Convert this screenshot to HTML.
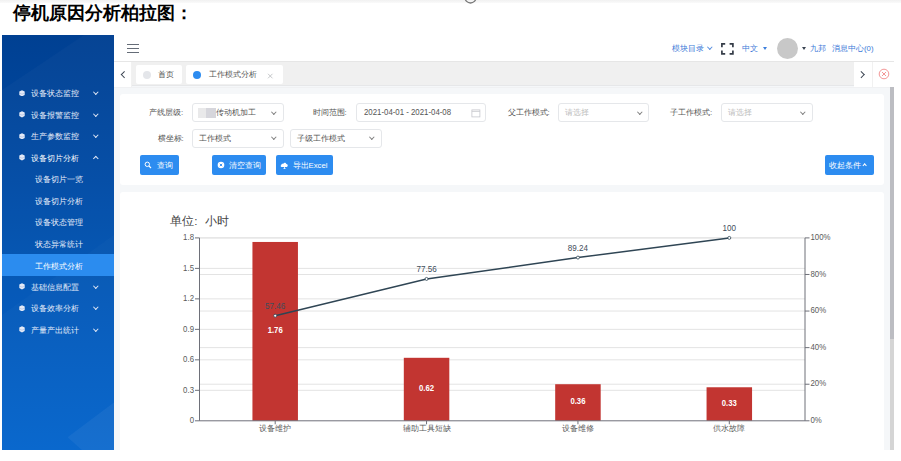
<!DOCTYPE html>
<html><head><meta charset="utf-8">
<style>
*{margin:0;padding:0;box-sizing:border-box}
html,body{width:901px;height:461px;overflow:hidden;background:#fff;font-family:"Liberation Sans",sans-serif;position:relative}
.a{position:absolute;white-space:nowrap}
#topband{left:0;top:0;width:901px;height:3px;background:linear-gradient(#f1f1f1,#fafafa)}
#title{left:12.5px;top:2px;font-size:18.2px;font-weight:bold;color:#000;line-height:22px}
#app{left:2px;top:35px;width:892px;height:415px;overflow:hidden;background:#f5f7f9}
#side{left:0;top:0;width:112px;height:415px;background:linear-gradient(180deg,#004092 0%,#004ba5 35%,#0057b9 65%,#0062cb 100%);overflow:hidden}
.mi{position:absolute;left:0;width:112px;height:21px;color:#e8eefa;font-size:7.7px;line-height:21px}
.mi .ic{position:absolute;left:16.6px;top:7.2px;width:6px;height:6.6px}.mi .ic svg{display:block}
.mi .tx{position:absolute;left:28.5px;top:0.5px}
.mi .ch{position:absolute;left:92px;top:7.8px;width:3.6px;height:3.6px;border-right:0.85px solid #dfe6f5;border-bottom:0.85px solid #dfe6f5;transform:rotate(45deg)}
.mi .ch.up{top:9.9px;transform:rotate(-135deg)}
.sub .tx{left:33px}
#hdr{left:112px;top:0;width:780px;height:26px;background:#fff;border-bottom:1px solid #eceef1}
.ham{position:absolute;height:1.6px;width:12.5px;background:#656c77}
.hr{color:#3d7ad8;font-size:7.8px;line-height:10px}
#tabs{left:112px;top:26px;width:780px;height:25px;background:#f0f0f0;border-bottom:1px solid #e4e6e9}
#content{left:112px;top:51px;width:776px;height:364px;background:#f5f7f9}
.card{position:absolute;background:#fff;border-radius:3px}
.lbl{color:#555;font-size:7.8px;line-height:10px;margin-top:0.8px}
.sel{position:absolute;border:1px solid #e5e7ea;border-radius:3px;background:#fff;height:18.5px}
.sel .v{position:absolute;left:6px;top:3.5px;font-size:7.8px;line-height:10px;color:#555}
.sel .ph{color:#bbb}
.sel .cv{position:absolute;top:5.3px;width:3.6px;height:3.6px;border-right:0.9px solid #808080;border-bottom:0.9px solid #808080;transform:rotate(45deg)}
.btn{position:absolute;background:#2d8cf0;border-radius:2px;color:#fff;font-size:7.8px;line-height:21px;height:20.5px}
#scroll{left:888px;top:52px;width:4px;height:363px;background:linear-gradient(#b9bbbe,#cfd0d2 60%,#d3d3d3)}
</style></head><body>
<div class="a" id="topband"></div>
<svg class="a" style="left:463px;top:-10px" width="16" height="16"><circle cx="7.5" cy="7.5" r="5.5" fill="none" stroke="#777" stroke-width="1.3"/></svg>
<div class="a" id="title">停机原因分析柏拉图：</div>

<div class="a" id="app">
  <div class="a" id="side">
    <svg class="a" style="left:0;top:0" width="112" height="415"><polygon points="0,55 112,-20 112,415 0,415" fill="rgba(255,255,255,0.025)"/><polygon points="0,280 112,200 112,415 0,415" fill="rgba(255,255,255,0.02)"/><polygon points="65.6,402.3 112,367.5 112,415 80,415" fill="rgba(255,255,255,0.05)"/></svg>
    <div class="mi" style="top:47.5px"><span class="ic"><svg width="6" height="6.6" viewBox="0 0 6 6.6"><path d="M3 0.2L5.7 1.6V5L3 6.4L0.3 5V1.6Z" fill="#e4eaf7"/><path d="M0.8 3.2L3 4.2L5.2 3.2" fill="none" stroke="#9bb2da" stroke-width="0.5"/></svg></span><span class="tx">设备状态监控</span><span class="ch"></span></div>
    <div class="mi" style="top:69px"><span class="ic"><svg width="6" height="6.6" viewBox="0 0 6 6.6"><path d="M3 0.2L5.7 1.6V5L3 6.4L0.3 5V1.6Z" fill="#e4eaf7"/><path d="M0.8 3.2L3 4.2L5.2 3.2" fill="none" stroke="#9bb2da" stroke-width="0.5"/></svg></span><span class="tx">设备报警监控</span><span class="ch"></span></div>
    <div class="mi" style="top:90.5px"><span class="ic"><svg width="6" height="6.6" viewBox="0 0 6 6.6"><path d="M3 0.2L5.7 1.6V5L3 6.4L0.3 5V1.6Z" fill="#e4eaf7"/><path d="M0.8 3.2L3 4.2L5.2 3.2" fill="none" stroke="#9bb2da" stroke-width="0.5"/></svg></span><span class="tx">生产参数监控</span><span class="ch"></span></div>
    <div class="mi" style="top:112px;color:#fff"><span class="ic"><svg width="6" height="6.6" viewBox="0 0 6 6.6"><path d="M3 0.2L5.7 1.6V5L3 6.4L0.3 5V1.6Z" fill="#e4eaf7"/><path d="M0.8 3.2L3 4.2L5.2 3.2" fill="none" stroke="#9bb2da" stroke-width="0.5"/></svg></span><span class="tx">设备切片分析</span><span class="ch up"></span></div>
    <div class="mi sub" style="top:133.5px"><span class="tx">设备切片一览</span></div>
    <div class="mi sub" style="top:155px"><span class="tx">设备切片分析</span></div>
    <div class="mi sub" style="top:176.5px"><span class="tx">设备状态管理</span></div>
    <div class="mi sub" style="top:198px"><span class="tx">状态异常统计</span></div>
    <div class="mi sub" style="top:219.3px;height:21.7px;line-height:23.5px;background:#2b8cef;color:#fff"><span class="tx">工作模式分析</span></div>
    <div class="mi" style="top:241px"><span class="ic"><svg width="6" height="6.6" viewBox="0 0 6 6.6"><path d="M3 0.2L5.7 1.6V5L3 6.4L0.3 5V1.6Z" fill="#e4eaf7"/><path d="M0.8 3.2L3 4.2L5.2 3.2" fill="none" stroke="#9bb2da" stroke-width="0.5"/></svg></span><span class="tx">基础信息配置</span><span class="ch"></span></div>
    <div class="mi" style="top:262.5px"><span class="ic"><svg width="6" height="6.6" viewBox="0 0 6 6.6"><path d="M3 0.2L5.7 1.6V5L3 6.4L0.3 5V1.6Z" fill="#e4eaf7"/><path d="M0.8 3.2L3 4.2L5.2 3.2" fill="none" stroke="#9bb2da" stroke-width="0.5"/></svg></span><span class="tx">设备效率分析</span><span class="ch"></span></div>
    <div class="mi" style="top:284px"><span class="ic"><svg width="6" height="6.6" viewBox="0 0 6 6.6"><path d="M3 0.2L5.7 1.6V5L3 6.4L0.3 5V1.6Z" fill="#e4eaf7"/><path d="M0.8 3.2L3 4.2L5.2 3.2" fill="none" stroke="#9bb2da" stroke-width="0.5"/></svg></span><span class="tx">产量产出统计</span><span class="ch"></span></div>
  </div>
</div>

<!-- header -->
<div class="a" style="left:114px;top:35px;width:780px;height:26.5px;background:#fff;border-bottom:1px solid #eef0f2"></div>
<div class="a ham" style="left:126.5px;top:43.7px"></div>
<div class="a ham" style="left:126.5px;top:47.6px"></div>
<div class="a ham" style="left:126.5px;top:51.5px"></div>
<div class="a hr" style="left:672px;top:43.5px">模块目录</div>
<div class="a" style="left:707.8px;top:45.3px;width:3.6px;height:3.6px;border-right:0.75px solid #5a8fdf;border-bottom:0.75px solid #5a8fdf;transform:rotate(45deg)"></div>
<svg class="a" style="left:721px;top:42.5px" width="13" height="12" viewBox="0 0 13 12"><path d="M0.9 4.2V0.9H4.2M8.6 0.9H11.9V4.2M11.9 7.6V10.9H8.6M4.2 10.9H0.9V7.6" fill="none" stroke="#353c48" stroke-width="1.7"/></svg>
<div class="a hr" style="left:741.5px;top:43.5px">中文</div>
<div class="a" style="left:762.5px;top:47px;width:0;height:0;border-left:2.7px solid transparent;border-right:2.7px solid transparent;border-top:3px solid #3d7fdd"></div>
<div class="a" style="left:777px;top:38px;width:21px;height:21px;border-radius:50%;background:#c8c8c8"></div>
<div class="a" style="left:801.5px;top:47px;width:0;height:0;border-left:2.8px solid transparent;border-right:2.8px solid transparent;border-top:3.2px solid #3b4452"></div>
<div class="a hr" style="left:810px;top:43.5px">九邦</div>
<div class="a hr" style="left:832px;top:43.5px">消息中心(0)</div>

<!-- tabs -->
<div class="a" style="left:114px;top:61.2px;width:780px;height:25.3px;background:#f0f0f0;border-top:1px solid #e6e6e6;border-bottom:1px solid #e6e7e9"></div>
<div class="a" style="left:114px;top:61.5px;width:18px;height:25px;background:#fff;border-right:1px solid #f1f1f1"></div>
<div class="a" style="left:121.5px;top:72px;width:4.5px;height:4.5px;border-left:1.2px solid #3b4452;border-bottom:1.2px solid #3b4452;transform:rotate(45deg)"></div>
<div class="a" style="left:135.5px;top:64.5px;width:46px;height:19.5px;background:#fff;border-radius:2px"></div>
<div class="a" style="left:143px;top:70.5px;width:8px;height:8px;border-radius:50%;background:#e4e6ea"></div>
<div class="a lbl" style="left:158px;top:69.5px">首页</div>
<div class="a" style="left:185.5px;top:64.5px;width:97.5px;height:19.5px;background:#fff;border-radius:2px"></div>
<div class="a" style="left:193px;top:70.5px;width:8px;height:8px;border-radius:50%;background:#2d8cf0"></div>
<div class="a lbl" style="left:208.5px;top:69.5px">工作模式分析</div>
<svg class="a" style="left:267px;top:72.5px" width="7" height="6"><path d="M1 0.8L5.5 5.3M5.5 0.8L1 5.3" stroke="#b8babd" stroke-width="0.8"/></svg>
<div class="a" style="left:854px;top:61.5px;width:18.5px;height:25px;background:#fff;border-right:1px solid #f1f1f1"></div>
<div class="a" style="left:859px;top:72px;width:4.5px;height:4.5px;border-right:1.2px solid #3b4452;border-top:1.2px solid #3b4452;transform:rotate(45deg)"></div>
<div class="a" style="left:872.5px;top:61.5px;width:21.5px;height:25px;background:#fff"></div>
<svg class="a" style="left:877px;top:67px" width="14" height="14"><circle cx="7" cy="7" r="4.8" fill="none" stroke="#f08a8a" stroke-width="0.9"/><path d="M5 5L9 9M9 5L5 9" stroke="#f08a8a" stroke-width="0.9"/></svg>

<!-- content bg -->
<div class="a" style="left:114px;top:86.5px;width:776px;height:363.5px;background:#f5f7f9"></div>
<div class="a" style="left:114px;top:86.5px;width:780px;height:1px;background:#f0f1f3"></div>
<div class="a" style="left:890px;top:87px;width:4px;height:363px;background:#d5d5d5"></div><div class="a" style="left:890px;top:87px;width:4px;height:252px;background:#bcbdc2"></div>

<!-- filter card -->
<div class="a card" style="left:119.5px;top:93.5px;width:764px;height:91px"></div>
<div class="a lbl" style="left:149px;top:107.5px">产线层级:</div>
<div class="sel" style="left:192px;top:103.3px;width:91.5px"><span class="a" style="left:5px;top:3.5px;width:8px;height:10px;background:#e9e9ea"></span><span class="a" style="left:13px;top:3.5px;width:10px;height:10px;background:#d6d6dc"></span><span class="v" style="left:23px">传动机加工</span><span class="cv" style="left:79px"></span></div>
<div class="a lbl" style="left:312.5px;top:107.5px">时间范围:</div>
<div class="sel" style="left:355.5px;top:103.3px;width:130px"><span class="v" style="left:7.5px;top:2.1px;font-size:9px;line-height:12px;transform:scaleX(0.87);transform-origin:0 0">2021-04-01 - 2021-04-08</span>
<svg class="a" style="left:114.8px;top:4.6px" width="10" height="9" viewBox="0 0 10 9"><rect x="0.9" y="0.9" width="8" height="7" fill="none" stroke="#c5c6cc" stroke-width="0.8"/><path d="M0.9 2.4H8.9" stroke="#c5c6cc" stroke-width="0.8"/></svg></div>
<div class="a lbl" style="left:507.5px;top:107.5px">父工作模式:</div>
<div class="sel" style="left:557.5px;top:103.3px;width:91.5px"><span class="v ph">请选择</span><span class="cv" style="left:79px"></span></div>
<div class="a lbl" style="left:670px;top:107.5px">子工作模式:</div>
<div class="sel" style="left:721px;top:103.3px;width:91.5px"><span class="v ph">请选择</span><span class="cv" style="left:79px"></span></div>
<div class="a lbl" style="left:157.5px;top:133.5px">横坐标:</div>
<div class="sel" style="left:192px;top:129px;width:91.5px"><span class="v">工作模式</span><span class="cv" style="left:79px"></span></div>
<div class="sel" style="left:290px;top:129px;width:91.5px"><span class="v">子级工作模式</span><span class="cv" style="left:79px"></span></div>
<div class="btn" style="left:139.5px;top:154.5px;width:39.5px"></div>
<svg class="a" style="left:144px;top:161px" width="8" height="8"><circle cx="3.3" cy="3.3" r="2.2" fill="none" stroke="#fff" stroke-width="1"/><path d="M5 5L7 7" stroke="#fff" stroke-width="1.1"/></svg>
<div class="a" style="left:157px;top:160.6px;color:#fff;font-size:7.8px;line-height:10px">查询</div>
<div class="btn" style="left:211.5px;top:154.5px;width:54.5px"></div>
<svg class="a" style="left:216.5px;top:161px" width="8" height="8"><circle cx="4" cy="4" r="3.3" fill="#fff"/><path d="M2.8 2.8L5.2 5.2M5.2 2.8L2.8 5.2" stroke="#2d8cf0" stroke-width="0.9"/></svg>
<div class="a" style="left:229px;top:160.6px;color:#fff;font-size:7.8px;line-height:10px">清空查询</div>
<div class="btn" style="left:275.5px;top:154.5px;width:57px"></div>
<svg class="a" style="left:280px;top:161px" width="9" height="9" viewBox="0 0 9 9"><path d="M1.6 6C0.5 6 0.3 4.4 1.3 4.1C1.3 2.9 2.5 2.4 3.2 2.9C3.7 1.5 5.9 1.5 6.3 3C7.5 3 8.1 4.2 7.6 5.1C7.5 5.7 7.1 6 6.6 6Z" fill="#fff"/><path d="M4.5 5.5V7.8M3.5 7L4.5 8L5.5 7" stroke="#fff" stroke-width="0.8" fill="none"/></svg>
<div class="a" style="left:292.5px;top:160.6px;color:#fff;font-size:7.8px;line-height:10px">导出Excel</div>
<div class="btn" style="left:825px;top:154.5px;width:49px"></div>
<div class="a" style="left:829px;top:160.6px;color:#fff;font-size:7.8px;line-height:10px">收起条件</div>
<div class="a" style="left:863px;top:163.8px;width:3.3px;height:3.3px;border-left:0.85px solid #fff;border-top:0.85px solid #fff;transform:rotate(45deg)"></div>

<!-- chart card -->
<div class="a card" style="left:119.5px;top:191.5px;width:764px;height:270px"></div>
<div class="a" style="left:169.5px;top:212.8px;font-size:11.6px;line-height:16px;color:#444">单位<span style="display:inline-block;width:11.8px;padding-left:0.8px">:</span>小时</div>

<!--chart--><svg class="a" style="left:0;top:0" width="901" height="461" viewBox="0 0 901 461" font-family="Liberation Sans, sans-serif">
<line x1="199.5" x2="805.0" y1="390.32" y2="390.32" stroke="#e3e3e3" stroke-width="1"/>
<line x1="199.5" x2="805.0" y1="359.83" y2="359.83" stroke="#e3e3e3" stroke-width="1"/>
<line x1="199.5" x2="805.0" y1="329.35" y2="329.35" stroke="#e3e3e3" stroke-width="1"/>
<line x1="199.5" x2="805.0" y1="298.87" y2="298.87" stroke="#e3e3e3" stroke-width="1"/>
<line x1="199.5" x2="805.0" y1="268.38" y2="268.38" stroke="#e3e3e3" stroke-width="1"/>
<line x1="199.5" x2="805.0" y1="237.90" y2="237.90" stroke="#e3e3e3" stroke-width="1"/>
<line x1="199.5" x2="805.0" y1="384.22" y2="384.22" stroke="#e3e3e3" stroke-width="1"/>
<line x1="199.5" x2="805.0" y1="347.64" y2="347.64" stroke="#e3e3e3" stroke-width="1"/>
<line x1="199.5" x2="805.0" y1="311.06" y2="311.06" stroke="#e3e3e3" stroke-width="1"/>
<line x1="199.5" x2="805.0" y1="274.48" y2="274.48" stroke="#e3e3e3" stroke-width="1"/>
<line x1="199.5" x2="805.0" y1="237.90" y2="237.90" stroke="#e3e3e3" stroke-width="1"/>
<rect x="252.44" y="241.96" width="45.5" height="178.84" fill="#c23531"/>
<rect x="403.81" y="357.80" width="45.5" height="63.00" fill="#c23531"/>
<rect x="555.19" y="384.22" width="45.5" height="36.58" fill="#c23531"/>
<rect x="706.56" y="387.27" width="45.5" height="33.53" fill="#c23531"/>
<path d="M199.5 237.9V420.8H805.0V237.9" fill="none" stroke="#6e7079" stroke-width="1"/>
<line x1="195.0" x2="199.5" y1="420.80" y2="420.80" stroke="#6e7079" stroke-width="1"/>
<text transform="translate(194.00 423.00) scale(0.87 1)" text-anchor="end" font-size="9" font-weight="normal" fill="#5a5a5a">0</text>
<line x1="195.0" x2="199.5" y1="390.32" y2="390.32" stroke="#6e7079" stroke-width="1"/>
<text transform="translate(194.00 392.52) scale(0.87 1)" text-anchor="end" font-size="9" font-weight="normal" fill="#5a5a5a">0.3</text>
<line x1="195.0" x2="199.5" y1="359.83" y2="359.83" stroke="#6e7079" stroke-width="1"/>
<text transform="translate(194.00 362.03) scale(0.87 1)" text-anchor="end" font-size="9" font-weight="normal" fill="#5a5a5a">0.6</text>
<line x1="195.0" x2="199.5" y1="329.35" y2="329.35" stroke="#6e7079" stroke-width="1"/>
<text transform="translate(194.00 331.55) scale(0.87 1)" text-anchor="end" font-size="9" font-weight="normal" fill="#5a5a5a">0.9</text>
<line x1="195.0" x2="199.5" y1="298.87" y2="298.87" stroke="#6e7079" stroke-width="1"/>
<text transform="translate(194.00 301.07) scale(0.87 1)" text-anchor="end" font-size="9" font-weight="normal" fill="#5a5a5a">1.2</text>
<line x1="195.0" x2="199.5" y1="268.38" y2="268.38" stroke="#6e7079" stroke-width="1"/>
<text transform="translate(194.00 270.58) scale(0.87 1)" text-anchor="end" font-size="9" font-weight="normal" fill="#5a5a5a">1.5</text>
<line x1="195.0" x2="199.5" y1="237.90" y2="237.90" stroke="#6e7079" stroke-width="1"/>
<text transform="translate(194.00 240.10) scale(0.87 1)" text-anchor="end" font-size="9" font-weight="normal" fill="#5a5a5a">1.8</text>
<line x1="805.0" x2="809.5" y1="420.80" y2="420.80" stroke="#6e7079" stroke-width="1"/>
<text transform="translate(810.50 423.00) scale(0.87 1)" text-anchor="start" font-size="9" font-weight="normal" fill="#5a5a5a">0%</text>
<line x1="805.0" x2="809.5" y1="384.22" y2="384.22" stroke="#6e7079" stroke-width="1"/>
<text transform="translate(810.50 386.42) scale(0.87 1)" text-anchor="start" font-size="9" font-weight="normal" fill="#5a5a5a">20%</text>
<line x1="805.0" x2="809.5" y1="347.64" y2="347.64" stroke="#6e7079" stroke-width="1"/>
<text transform="translate(810.50 349.84) scale(0.87 1)" text-anchor="start" font-size="9" font-weight="normal" fill="#5a5a5a">40%</text>
<line x1="805.0" x2="809.5" y1="311.06" y2="311.06" stroke="#6e7079" stroke-width="1"/>
<text transform="translate(810.50 313.26) scale(0.87 1)" text-anchor="start" font-size="9" font-weight="normal" fill="#5a5a5a">60%</text>
<line x1="805.0" x2="809.5" y1="274.48" y2="274.48" stroke="#6e7079" stroke-width="1"/>
<text transform="translate(810.50 276.68) scale(0.87 1)" text-anchor="start" font-size="9" font-weight="normal" fill="#5a5a5a">80%</text>
<line x1="805.0" x2="809.5" y1="237.90" y2="237.90" stroke="#6e7079" stroke-width="1"/>
<text transform="translate(810.50 240.10) scale(0.87 1)" text-anchor="start" font-size="9" font-weight="normal" fill="#5a5a5a">100%</text>
<line x1="275.19" x2="275.19" y1="420.8" y2="424.3" stroke="#6e7079" stroke-width="1"/>
<text x="275.19" y="431.2" text-anchor="middle" font-size="7.8" fill="#5a5a5a">设备维护</text>
<text transform="translate(275.19 333.18) scale(0.9 1)" text-anchor="middle" font-size="8.6" font-weight="bold" fill="#fff">1.76</text>
<line x1="426.56" x2="426.56" y1="420.8" y2="424.3" stroke="#6e7079" stroke-width="1"/>
<text x="426.56" y="431.2" text-anchor="middle" font-size="7.8" fill="#5a5a5a">辅助工具短缺</text>
<text transform="translate(426.56 391.10) scale(0.9 1)" text-anchor="middle" font-size="8.6" font-weight="bold" fill="#fff">0.62</text>
<line x1="577.94" x2="577.94" y1="420.8" y2="424.3" stroke="#6e7079" stroke-width="1"/>
<text x="577.94" y="431.2" text-anchor="middle" font-size="7.8" fill="#5a5a5a">设备维修</text>
<text transform="translate(577.94 404.31) scale(0.9 1)" text-anchor="middle" font-size="8.6" font-weight="bold" fill="#fff">0.36</text>
<line x1="729.31" x2="729.31" y1="420.8" y2="424.3" stroke="#6e7079" stroke-width="1"/>
<text x="729.31" y="431.2" text-anchor="middle" font-size="7.8" fill="#5a5a5a">供水故障</text>
<text transform="translate(729.31 405.83) scale(0.9 1)" text-anchor="middle" font-size="8.6" font-weight="bold" fill="#fff">0.33</text>
<polyline points="275.19,315.71 426.56,278.94 577.94,257.58 729.31,237.90" fill="none" stroke="#2f4554" stroke-width="1.5"/>
<circle cx="275.19" cy="315.71" r="1.5" fill="#fff" stroke="#2f4554" stroke-width="0.8"/>
<text transform="translate(275.19 308.71) scale(0.87 1)" text-anchor="middle" font-size="9.3" font-weight="normal" fill="#3f4d5b">57.46</text>
<circle cx="426.56" cy="278.94" r="1.5" fill="#fff" stroke="#2f4554" stroke-width="0.8"/>
<text transform="translate(426.56 271.94) scale(0.87 1)" text-anchor="middle" font-size="9.3" font-weight="normal" fill="#3f4d5b">77.56</text>
<circle cx="577.94" cy="257.58" r="1.5" fill="#fff" stroke="#2f4554" stroke-width="0.8"/>
<text transform="translate(577.94 250.58) scale(0.87 1)" text-anchor="middle" font-size="9.3" font-weight="normal" fill="#3f4d5b">89.24</text>
<circle cx="729.31" cy="237.90" r="1.5" fill="#fff" stroke="#2f4554" stroke-width="0.8"/>
<text transform="translate(729.31 230.90) scale(0.87 1)" text-anchor="middle" font-size="9.3" font-weight="normal" fill="#3f4d5b">100</text>
</svg><!--/chart-->
<div class="a" style="left:0;top:450px;width:901px;height:11px;background:#fff"></div>
</body></html>
